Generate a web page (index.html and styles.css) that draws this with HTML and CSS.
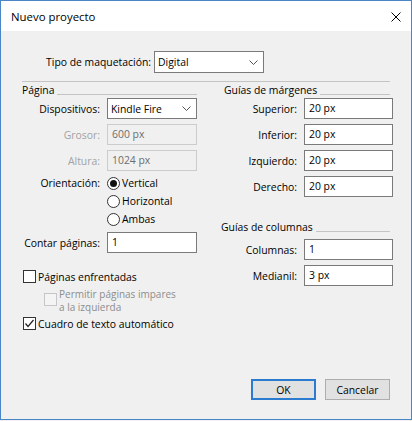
FILE: index.html
```html
<!DOCTYPE html>
<html lang="es">
<head>
    <meta charset="UTF-8">
    <title>Nuevo proyecto</title>
    <link rel="stylesheet" href="styles.css">
</head>
<body>
<div class="window">
    <div class="titlebar">
        <span class="title">Nuevo proyecto</span>
        <svg class="close" width="10" height="10" viewBox="0 0 10 10">
            <path d="M0.5 0.5 L9.5 9.5 M9.5 0.5 L0.5 9.5" stroke="#000" stroke-width="1" fill="none"/>
        </svg>
    </div>

    <div class="content">
        <div class="type-row">
            <span class="type-label">Tipo de maquetación:</span>
            <div class="select select-type">
                <span>Digital</span>
                <svg width="9" height="5" viewBox="0 0 9 5"><polyline points="0.5,0.5 4.5,4.5 8.5,0.5" stroke="#555" fill="none"/></svg>
            </div>
        </div>

        <div class="rule"></div>

        <div class="columns">
            <div class="col col-left">
                <div class="group-head"><span>Página</span><span class="head-line"></span></div>

                <div class="field first">
                    <label>Dispositivos:</label>
                    <div class="select">
                        <span>Kindle Fire</span>
                        <svg width="9" height="5" viewBox="0 0 9 5"><polyline points="0.5,0.5 4.5,4.5 8.5,0.5" stroke="#555" fill="none"/></svg>
                    </div>
                </div>
                <div class="field disabled">
                    <label>Grosor:</label>
                    <div class="input">600 px</div>
                </div>
                <div class="field disabled">
                    <label>Altura:</label>
                    <div class="input">1024 px</div>
                </div>

                <div class="field orient">
                    <label>Orientación:</label>
                    <div class="radio-list">
                        <div class="radio-row"><span class="radio checked"></span>Vertical</div>
                        <div class="radio-row"><span class="radio"></span>Horizontal</div>
                        <div class="radio-row"><span class="radio"></span>Ambas</div>
                    </div>
                </div>

                <div class="field count">
                    <label>Contar páginas:</label>
                    <div class="input">1</div>
                </div>

                <div class="check-row facing">
                    <span class="checkbox"></span>Páginas enfrentadas
                </div>
                <div class="check-row sub">
                    <span class="checkbox"></span>
                    <span class="sub-text"><span>Permitir páginas impares</span><span>a la izquierda</span></span>
                </div>
                <div class="check-row auto">
                    <span class="checkbox">
                        <svg width="11" height="11" viewBox="0 0 11 11"><polyline points="1.5,5.5 4,8.5 9.5,2" stroke="#222" stroke-width="1.2" fill="none"/></svg>
                    </span>Cuadro de texto automático
                </div>
            </div>

            <div class="col col-right">
                <div class="group-head"><span>Guías de márgenes</span><span class="head-line"></span></div>

                <div class="field first">
                    <label>Superior:</label>
                    <div class="input">20 px</div>
                </div>
                <div class="field">
                    <label>Inferior:</label>
                    <div class="input">20 px</div>
                </div>
                <div class="field">
                    <label>Izquierdo:</label>
                    <div class="input">20 px</div>
                </div>
                <div class="field">
                    <label>Derecho:</label>
                    <div class="input">20 px</div>
                </div>

                <div class="group-head cols-head"><span>Guías de columnas</span><span class="head-line"></span></div>

                <div class="field first-cols">
                    <label>Columnas:</label>
                    <div class="input">1</div>
                </div>
                <div class="field">
                    <label>Medianil:</label>
                    <div class="input">3 px</div>
                </div>
            </div>
        </div>

        <div class="buttons">
            <button class="btn btn-ok">OK</button>
            <button class="btn">Cancelar</button>
        </div>
    </div>
</div>
</body>
</html>
```

FILE: styles.css
```css
* {
    box-sizing: border-box;
}

body {
    margin: 0;
    background: #f0f0f0;
    font-family: "Open Sans", "Noto Sans", sans-serif;
    font-size: 10.4px;
    color: #000;
}

.window {
    width: 412px;
    height: 420px;
    border: 1px solid #4a86c5;
    background: #f0f0f0;
    display: flex;
    flex-direction: column;
}

.titlebar {
    height: 30px;
    flex: none;
    background: #fff;
    display: flex;
    align-items: center;
    justify-content: space-between;
    padding: 0 10px 0 10px;
}

.title {
    font-size: 11.4px;
}

.close {
    margin-top: 1px;
}

.content {
    flex: 1;
    display: flex;
    flex-direction: column;
    padding: 20px 18px 19px 21px;
}

.type-row {
    display: flex;
    align-items: center;
    height: 22px;
}

.type-label {
    width: 129px;
    text-align: right;
    margin-right: 3px;
    white-space: nowrap;
}

.select {
    height: 21px;
    width: 90px;
    background: #fff;
    border: 1px solid #7a7a7a;
    display: flex;
    align-items: center;
    justify-content: space-between;
    padding: 0 5px 0 3px;
}

.select-type {
    width: 110px;
    height: 22px;
}

.rule {
    height: 1px;
    background: #c4c4c4;
    margin: 8px 3px 0 0;
}

.columns {
    display: grid;
    grid-template-columns: 175px 172px;
    column-gap: 24px;
}

.group-head {
    display: flex;
    height: 14px;
    line-height: 14px;
    margin-top: 1px;
    white-space: nowrap;
}

.col-right .group-head {
    padding-left: 3px;
    margin-right: 3px;
}

.head-line {
    flex: 1;
    border-bottom: 1px solid #c4c4c4;
    margin: 0 0 2px 3px;
}

.cols-head {
    margin-top: 23px;
}

.col-right .cols-head {
    padding-left: 0;
}

.field {
    display: flex;
    align-items: center;
    height: 21px;
    margin-top: 5px;
}

.field.first {
    margin-top: 1px;
}

.field.first-cols {
    margin-top: 5px;
}

.field label {
    width: 78px;
    margin-right: 7px;
    text-align: right;
    white-space: nowrap;
}

.col-right .field label {
    width: 76px;
}

.input {
    height: 21px;
    width: 90px;
    background: #fff;
    border: 1px solid #7a7a7a;
    padding-left: 4px;
    line-height: 19px;
}

.col-right .input {
    width: 89px;
}

.field.disabled label {
    color: #a2a2a2;
}

.field.disabled .input {
    background: #f0f0f0;
    border-color: #cccccc;
    color: #6d6d6d;
}

.field.orient {
    height: auto;
    align-items: flex-start;
    margin-top: 3px;
}

.field.orient label {
    line-height: 18px;
}

.radio-row {
    display: flex;
    align-items: center;
    height: 18px;
}

.radio {
    width: 13px;
    height: 13px;
    border: 1px solid #333;
    border-radius: 50%;
    background: #fff;
    margin-right: 2px;
    display: flex;
    align-items: center;
    justify-content: center;
}

.radio.checked::after {
    content: "";
    width: 7px;
    height: 7px;
    border-radius: 50%;
    background: #111;
}

.field.count {
    margin-top: 4px;
}

.check-row {
    display: flex;
    align-items: center;
    height: 13px;
    margin-left: 1px;
    white-space: nowrap;
}

.checkbox {
    width: 13px;
    height: 13px;
    border: 1px solid #333;
    background: #fff;
    margin-right: 2px;
    display: flex;
    align-items: center;
    justify-content: center;
    flex: none;
}

.check-row.facing {
    margin-top: 17px;
}

.check-row.sub {
    height: 25px;
    margin: 5px 0 0 22px;
    align-items: flex-start;
    color: #8d8d8d;
}

.check-row.sub .checkbox {
    margin-top: 5px;
    border-color: #c6c6c6;
    background: #f4f4f4;
}

.sub-text {
    display: flex;
    flex-direction: column;
    gap: 1px;
}

.sub-text span {
    display: block;
    height: 12px;
    line-height: 12px;
    font-size: 10px;
}

.check-row.auto {
    margin-top: 4px;
}

.buttons {
    margin-top: auto;
    margin-right: 3px;
    display: flex;
    justify-content: flex-end;
    gap: 9px;
}

.btn {
    width: 65px;
    height: 21px;
    background: #e1e1e1;
    border: 1px solid #adadad;
    font-family: inherit;
    font-size: inherit;
    color: #000;
    padding: 0;
}

.btn-ok {
    border: 2px solid #2b7cd0;
}
```
